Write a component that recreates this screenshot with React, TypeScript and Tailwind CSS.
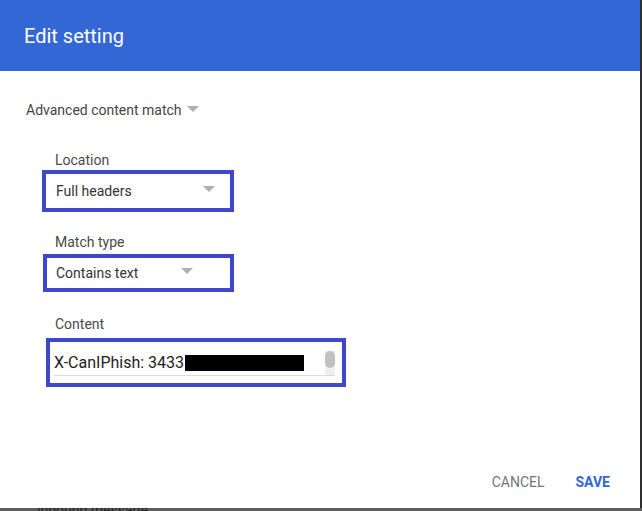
import React from "react";

const font = { fontFamily: "Roboto, 'Noto Sans', Arial, sans-serif" };

function Caret({ className = "" }: { className?: string }) {
  return (
    <svg width="12" height="6" viewBox="0 0 12 6" className={className}>
      <path d="M0 0 L12 0 L6 6 Z" fill="#b0b0b0" />
    </svg>
  );
}

export default function App() {
  return (
    <div className="w-[642px] h-[511px] bg-[#5e5e5e] flex flex-col overflow-hidden" style={font}>
      <div className="flex h-[508px]">
        <div className="w-[640px] h-full bg-white flex flex-col">
          {/* dialog title bar */}
          <div className="h-[71px] bg-[#3367d6] flex items-center pl-[24px]">
            <span className="text-[20px] text-white leading-none">Edit setting</span>
          </div>

          {/* body */}
          <div className="pl-[26px] pt-[29px]">
            <div className="flex items-center gap-[5px] h-[20px]">
              <span className="text-[14px] text-[#444]">Advanced content match</span>
              <Caret className="mb-[3px]" />
            </div>
          </div>

          <div className="pl-[21px]">
            <div className="ml-[34px] mt-[32px] text-[14px] leading-[16px] text-[#4a4a4a]">Location</div>
            <div className="ml-[21px] mt-[2px] w-[192px] h-[42px] border-[4px] border-[#3f48cc] flex items-center pl-[10px] pr-[15px]">
              <span className="text-[14px] text-[#333]">Full headers</span>
              <Caret className="ml-auto mb-[5px]" />
            </div>

            <div className="ml-[34px] mt-[22px] text-[14px] leading-[16px] text-[#4a4a4a]">Match type</div>
            <div className="ml-[22px] mt-[4px] w-[191px] h-[38px] border-[4px] border-[#3f48cc] flex items-center pl-[9px] pr-[37px]">
              <span className="text-[14px] text-[#333]">Contains text</span>
              <Caret className="ml-auto mb-[5px]" />
            </div>

            <div className="ml-[34px] mt-[24px] text-[14px] leading-[16px] text-[#4a4a4a]">Content</div>
            <div className="ml-[25px] mt-[6px] w-[300px] h-[49px] border-[4px] border-[#3f48cc] pt-[9px] pl-[4px]">
              <div className="w-[281px] h-[25px] border-b border-[#dcdcdc] flex">
                <span className="text-[16px] leading-[24px] text-[#222] whitespace-nowrap">X-CanIPhish: 3433</span>
                <div className="ml-[1px] mt-[4px] w-[119px] h-[16px] bg-black" />
                <div className="ml-auto w-[10px] h-[24px] bg-[#efefef]">
                  <div className="w-[10px] h-[17px] rounded-full bg-[#c1c1c1]" />
                </div>
              </div>
            </div>
          </div>

          {/* actions */}
          <div className="mt-auto flex justify-end items-center gap-[31px] pr-[30px] pb-[16px] text-[14px] leading-[20px]">
            <button className="text-[#757575]">CANCEL</button>
            <button className="text-[#3367d6] font-bold">SAVE</button>
          </div>
        </div>
        <div className="flex-1 bg-[#2f2f2f]" />
      </div>
      <div className="h-[3px] relative overflow-hidden">
        <span className="absolute left-[37px] top-[-8px] text-[14px] text-[#222] whitespace-nowrap">inbound message</span>
      </div>
    </div>
  );
}
